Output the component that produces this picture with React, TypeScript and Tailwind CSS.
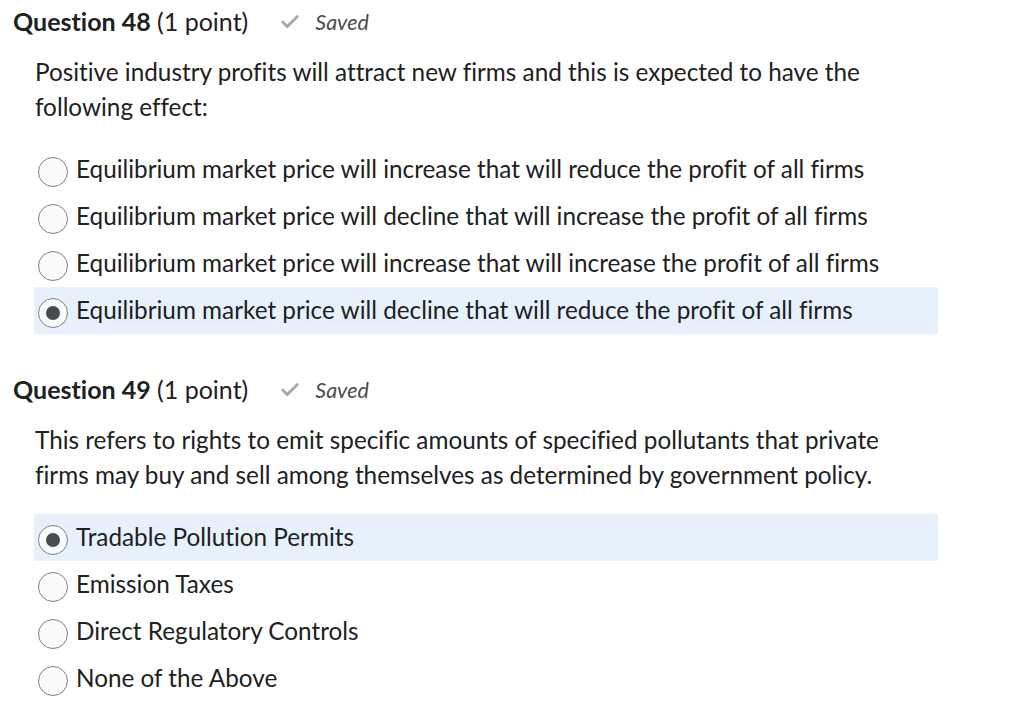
import { Check } from "lucide-react";

type Q = {
  num: number;
  text: string[];
  options: string[];
  selected: number;
};

const questions: Q[] = [
  {
    num: 48,
    text: [
      "Positive industry profits will attract new firms and this is expected to have the",
      "following effect:",
    ],
    options: [
      "Equilibrium market price will increase that will reduce the profit of all firms",
      "Equilibrium market price will decline that will increase the profit of all firms",
      "Equilibrium market price will increase that will increase the profit of all firms",
      "Equilibrium market price will decline that will reduce the profit of all firms",
    ],
    selected: 3,
  },
  {
    num: 49,
    text: [
      "This refers to rights to emit specific amounts of specified pollutants that private",
      "firms may buy and sell among themselves as determined by government policy.",
    ],
    options: [
      "Tradable Pollution Permits",
      "Emission Taxes",
      "Direct Regulatory Controls",
      "None of the Above",
    ],
    selected: 0,
  },
];

function Radio({ checked }: { checked: boolean }) {
  return (
    <span className="mt-[5px] flex h-[30px] w-[30px] shrink-0 items-center justify-center rounded-full border border-[#7c8287] bg-[#f9fafc]">
      {checked && <span className="h-[14px] w-[14px] rounded-full bg-[#494c4e]" />}
    </span>
  );
}

function Question({ q }: { q: Q }) {
  return (
    <div>
      {/* header */}
      <div className="flex h-[44px] items-center pl-[13px]">
        <h2 className="text-[25px] text-[#202122]">
          <span className="font-bold">Question {q.num}</span> (1 point)
        </h2>
        <Check className="ml-[31px] h-[22px] w-[22px] text-[#a3a6a8]" strokeWidth={3} />
        <span className="ml-[14px] text-[21.5px] italic text-[#494c4e]">Saved</span>
      </div>

      {/* question text */}
      <div className="mt-[10px] pl-[35px] text-[24.3px] leading-[35px] text-[#202122]">
        {q.text.map((line, i) => (
          <div key={i}>{line}</div>
        ))}
      </div>

      {/* options */}
      <div className="mt-[22px] w-[904px] ml-[34px]">
        {q.options.map((opt, i) => (
          <div
            key={i}
            className={`flex h-[47px] items-center gap-[8px] pl-[4px] ${
              i === q.selected ? "bg-[#e7f1fc]" : ""
            }`}
          >
            <Radio checked={i === q.selected} />
            <span className="text-[24.3px] text-[#202122]">{opt}</span>
          </div>
        ))}
      </div>
    </div>
  );
}

export default function App() {
  return (
    <div
      className="min-h-[715px] w-[1013px] bg-white [font-variant-ligatures:none]"
      style={{ fontFamily: "Lato, 'Liberation Sans', sans-serif" }}
    >
      <Question q={questions[0]} />
      <div className="mt-[34px]">
        <Question q={questions[1]} />
      </div>
    </div>
  );
}
